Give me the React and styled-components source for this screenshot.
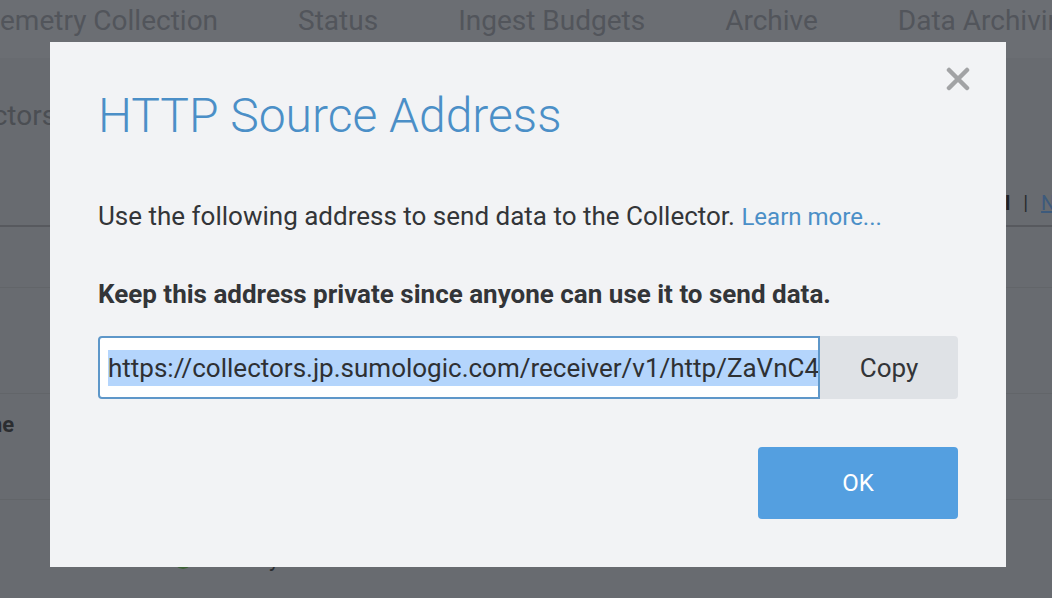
import React from 'react';
import styled, { createGlobalStyle } from 'styled-components';

const Global = createGlobalStyle`
  html, body { margin: 0; padding: 0; background: #686b70; overflow: hidden; }
  body { font-family: Roboto, "Liberation Sans", Arial, sans-serif; }
  * { box-sizing: border-box; }
`;

const Page = styled.div`
  width: 1052px;
  height: 598px;
  overflow: hidden;
  background: #686b70;
  display: flex;
  flex-direction: column;
`;

const TabBar = styled.nav`
  flex: none;
  height: 58px;
  background: #6b6e73;
  padding-top: 4px;
  overflow: hidden;
`;

const TabList = styled.div`
  display: flex;
  gap: 80px;
  margin-left: ${p => p.$shift}px;
  white-space: nowrap;
`;

const Tab = styled.span`
  font-size: 28px;
  line-height: 34px;
  color: #52555b;
`;

const HeaderSection = styled.header`
  flex: none;
  height: 169px;
  border-bottom: 2px solid #57595e;
  padding-top: 41px;
  display: flex;
  flex-direction: column;
`;

const PageTitle = styled.h1`
  margin: 0 0 0 ${p => p.$shift}px;
  font-size: 28px;
  line-height: 34px;
  font-weight: 400;
  color: #4b4e53;
  white-space: nowrap;
`;

const Toolbar = styled.div`
  margin-top: 58px;
  display: flex;
  justify-content: flex-end;
  align-items: center;
  margin-right: -29px;
  font-size: 20px;
  line-height: 24px;
  white-space: nowrap;
`;

const ToolStrong = styled.span`
  color: #1f2124;
  font-weight: 700;
`;

const ToolSep = styled.span`
  color: #2a2c2f;
  margin: 0 13px;
`;

const ToolLink = styled.a`
  color: #3d5a7c;
  text-decoration: underline;
`;

const TableHead = styled.div`
  flex: none;
  height: 61px;
  border-bottom: 1px solid #626569;
`;

const Row = styled.div`
  flex: none;
  height: 106px;
  border-bottom: 1px solid #626569;
  display: flex;
  align-items: ${p => p.$align || 'center'};
  padding-top: ${p => p.$pad || 0}px;
  white-space: nowrap;
`;

const NameCell = styled.span`
  margin-left: ${p => p.$shift}px;
  font-size: 22px;
  font-weight: 700;
  color: #2b2d30;
`;

const StatusCell = styled.span`
  margin-left: 173px;
  display: flex;
  align-items: center;
  gap: 12px;
  font-size: 22px;
  line-height: 26px;
  color: #2b2d30;
`;

const Dot = styled.span`
  width: 20px;
  height: 20px;
  border-radius: 50%;
  background: #3d6236;
`;

const Overlay = styled.div`
  position: fixed;
  inset: 0;
  display: flex;
  align-items: flex-start;
  justify-content: flex-start;
  padding: 42px 0 0 50px;
`;

const Dialog = styled.div`
  position: relative;
  width: 956px;
  height: 525px;
  background: #f2f3f5;
  padding: 46px 48px 48px;
  display: flex;
  flex-direction: column;
`;

const CloseButton = styled.button`
  position: absolute;
  top: 25px;
  right: 36px;
  width: 24px;
  height: 24px;
  padding: 0;
  border: none;
  background: transparent;
  cursor: pointer;
  display: flex;
`;

const Title = styled.h2`
  margin: 0;
  font-size: 48px;
  line-height: 56px;
  font-weight: 300;
  color: #4b8fc7;
  white-space: nowrap;
`;

const Intro = styled.p`
  margin: 57px 0 0;
  font-size: 26px;
  line-height: 30px;
  color: #333538;
  white-space: nowrap;
`;

const LearnMore = styled.a`
  font-size: 24px;
  color: #4b8fc7;
  text-decoration: none;
`;

const Warning = styled.p`
  margin: 47px 0 0;
  font-size: 26px;
  line-height: 30px;
  font-weight: 700;
  color: #333538;
  white-space: nowrap;
`;

const AddressRow = styled.div`
  margin-top: 27px;
  height: 64px;
  display: flex;
`;

const AddressField = styled.div`
  flex: 1;
  min-width: 0;
  background: #ffffff;
  border: 2px solid #5e97c9;
  border-radius: 4px 0 0 4px;
  padding-left: 8px;
  display: flex;
  align-items: center;
  overflow: hidden;
`;

const Selected = styled.span`
  display: inline-block;
  line-height: 36px;
  font-size: 26px;
  color: #2e3033;
  background: #b4d5fc;
  white-space: nowrap;
`;

const CopyButton = styled.button`
  flex: none;
  width: 138px;
  border: none;
  border-radius: 0 4px 4px 0;
  background: #dfe2e6;
  color: #333538;
  font-family: inherit;
  font-size: 26px;
  cursor: pointer;
`;

const Footer = styled.div`
  margin-top: 48px;
  display: flex;
  justify-content: flex-end;
`;

const OkButton = styled.button`
  width: 200px;
  height: 72px;
  border: none;
  border-radius: 4px;
  background: #549fe0;
  color: #ffffff;
  font-family: inherit;
  font-size: 24px;
  cursor: pointer;
`;

const tabs = ['Telemetry Collection', 'Status', 'Ingest Budgets', 'Archive', 'Data Archiving'];

export default function App() {
  return (
    <>
      <Global />
      <Page>
        <TabBar>
          <TabList $shift={-37}>
            {tabs.map(t => <Tab key={t}>{t}</Tab>)}
          </TabList>
        </TabBar>
        <HeaderSection>
          <PageTitle $shift={-70}>Collectors</PageTitle>
          <Toolbar>
            <ToolStrong>Expand All</ToolStrong>
            <ToolSep>|</ToolSep>
            <ToolLink href="#">New</ToolLink>
          </Toolbar>
        </HeaderSection>
        <TableHead />
        <Row />
        <Row $align="flex-start" $pad={18}>
          <NameCell $shift={-44}>Name</NameCell>
        </Row>
        <Row $pad={12}>
          <StatusCell><Dot />Healthy</StatusCell>
        </Row>
      </Page>
      <Overlay>
        <Dialog role="dialog" aria-label="HTTP Source Address">
          <CloseButton aria-label="Close">
            <svg width="24" height="24" viewBox="0 0 24 24">
              <path d="M3 3 L21 21 M21 3 L3 21" stroke="#a2a3a5" strokeWidth="4.5" strokeLinecap="round" fill="none" />
            </svg>
          </CloseButton>
          <Title>HTTP Source Address</Title>
          <Intro>
            Use the following address to send data to the Collector. <LearnMore href="#">Learn more...</LearnMore>
          </Intro>
          <Warning>Keep this address private since anyone can use it to send data.</Warning>
          <AddressRow>
            <AddressField>
              <Selected>https://collectors.jp.sumologic.com/receiver/v1/http/ZaVnC4dhaV2kTqR8xLmN0pWc7sYbE3uFgH9jKlZx</Selected>
            </AddressField>
            <CopyButton>Copy</CopyButton>
          </AddressRow>
          <Footer>
            <OkButton>OK</OkButton>
          </Footer>
        </Dialog>
      </Overlay>
    </>
  );
}
